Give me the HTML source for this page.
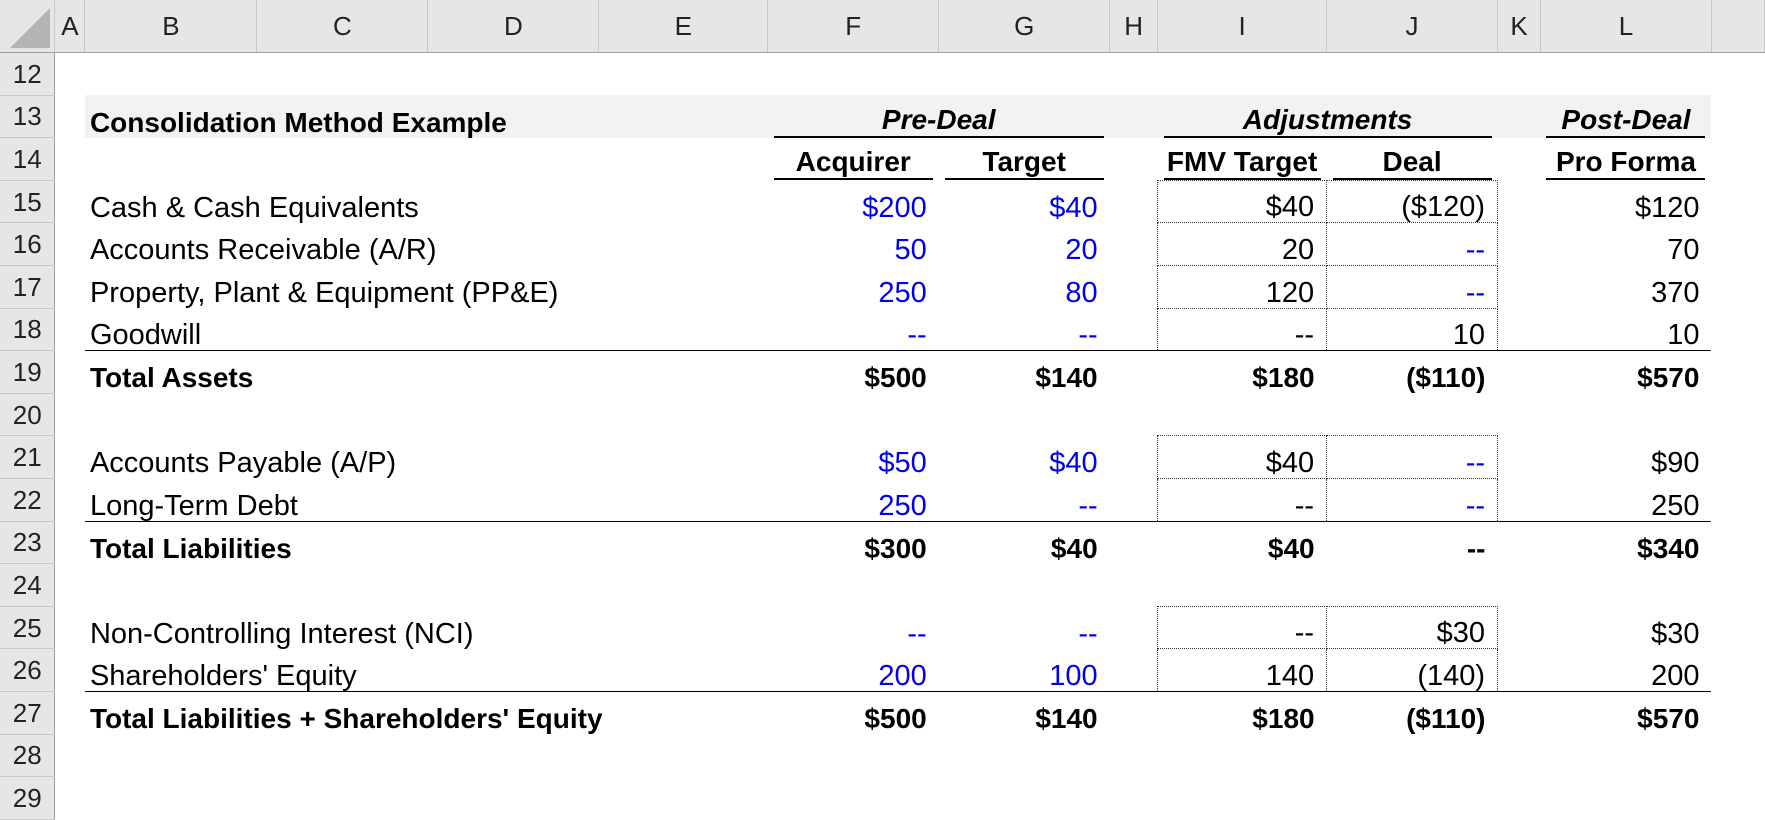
<!DOCTYPE html>
<html><head><meta charset="utf-8"><style>
body{margin:0;width:1765px;height:781px;overflow:hidden;background:#fff;font-family:"Liberation Sans",Arial,sans-serif;}
table{border-collapse:collapse;table-layout:fixed;position:absolute;left:0;top:0;}
td{padding:0;height:41.6px;font-size:29px;white-space:nowrap;overflow:visible;vertical-align:bottom;line-height:30px;}
tr.hdr td{height:52px;background:#e6e6e6;text-align:center;vertical-align:middle;font-size:26px;color:#222;border-right:1px solid #c8c8c8;border-bottom:1px solid #9e9e9e;line-height:30px;}
td.rn{background:#e6e6e6;text-align:center;font-size:26px;color:#222;border-right:1px solid #9e9e9e;border-bottom:1px solid #c8c8c8;vertical-align:middle;}
.r{text-align:right;padding-right:12px;}
.l{padding-left:5px;}
.b{font-weight:bold;font-size:28px;}
.bl{color:#0000ee;}
.g{background:#f2f2f2;}
.d{border:1px dotted #333;}
.t td.x{border-top:1.5px solid #000;}
.u{border-bottom:2px solid #000;margin:0 6px;text-align:center;line-height:32px;}
.it{font-style:italic;font-weight:bold;font-size:28px;}
</style></head><body>
<table>
<colgroup>
<col style="width:55px"><col style="width:30px"><col style="width:172px"><col style="width:171px"><col style="width:171px"><col style="width:169px"><col style="width:171px"><col style="width:171px"><col style="width:48px"><col style="width:169px"><col style="width:171px"><col style="width:43px"><col style="width:171px"><col style="width:53px">
</colgroup>
<tr class="hdr"><td style="position:relative"><svg width="40" height="40" style="position:absolute;right:4px;bottom:4px"><polygon points="40,0 40,40 0,40" fill="#b4b4b4"/></svg></td><td>A</td><td>B</td><td>C</td><td>D</td><td>E</td><td>F</td><td>G</td><td>H</td><td>I</td><td>J</td><td>K</td><td>L</td><td></td></tr>
<tr><td class="rn">12</td><td></td><td></td><td></td><td></td><td></td><td></td><td></td><td></td><td></td><td></td><td></td><td></td><td></td></tr>
<tr><td class="rn">13</td><td></td><td class="g l b" colspan="4">Consolidation Method Example</td><td class="g" colspan="2"><div class="u it">Pre-Deal</div></td><td class="g"></td><td class="g" colspan="2"><div class="u it">Adjustments</div></td><td class="g"></td><td class="g"><div class="u it">Post-Deal</div></td><td></td></tr>
<tr><td class="rn">14</td><td></td><td></td><td></td><td></td><td></td><td><div class="u b">Acquirer</div></td><td><div class="u b">Target</div></td><td></td><td><div class="u b">FMV Target</div></td><td><div class="u b">Deal</div></td><td></td><td><div class="u b">Pro Forma</div></td><td></td></tr>
<tr><td class="rn">15</td><td></td><td class="l" colspan="4">Cash &amp; Cash Equivalents</td><td class="r bl">$200</td><td class="r bl">$40</td><td></td><td class="r d">$40</td><td class="r d">($120)</td><td></td><td class="r">$120</td><td></td></tr>
<tr><td class="rn">16</td><td></td><td class="l" colspan="4">Accounts Receivable (A/R)</td><td class="r bl">50</td><td class="r bl">20</td><td></td><td class="r d">20</td><td class="r d bl">--</td><td></td><td class="r">70</td><td></td></tr>
<tr><td class="rn">17</td><td></td><td class="l" colspan="4">Property, Plant &amp; Equipment (PP&amp;E)</td><td class="r bl">250</td><td class="r bl">80</td><td></td><td class="r d">120</td><td class="r d bl">--</td><td></td><td class="r">370</td><td></td></tr>
<tr><td class="rn">18</td><td></td><td class="l" colspan="4">Goodwill</td><td class="r bl">--</td><td class="r bl">--</td><td></td><td class="r d">--</td><td class="r d">10</td><td></td><td class="r">10</td><td></td></tr>
<tr class="t"><td class="rn">19</td><td></td><td class="x l b" colspan="4">Total Assets</td><td class="x r b">$500</td><td class="x r b">$140</td><td class="x"></td><td class="x r b">$180</td><td class="x r b">($110)</td><td class="x"></td><td class="x r b">$570</td><td></td></tr>
<tr><td class="rn">20</td><td></td><td></td><td></td><td></td><td></td><td></td><td></td><td></td><td></td><td></td><td></td><td></td><td></td></tr>
<tr><td class="rn">21</td><td></td><td class="l" colspan="4">Accounts Payable (A/P)</td><td class="r bl">$50</td><td class="r bl">$40</td><td></td><td class="r d">$40</td><td class="r d bl">--</td><td></td><td class="r">$90</td><td></td></tr>
<tr><td class="rn">22</td><td></td><td class="l" colspan="4">Long-Term Debt</td><td class="r bl">250</td><td class="r bl">--</td><td></td><td class="r d">--</td><td class="r d bl">--</td><td></td><td class="r">250</td><td></td></tr>
<tr class="t"><td class="rn">23</td><td></td><td class="x l b" colspan="4">Total Liabilities</td><td class="x r b">$300</td><td class="x r b">$40</td><td class="x"></td><td class="x r b">$40</td><td class="x r b">--</td><td class="x"></td><td class="x r b">$340</td><td></td></tr>
<tr><td class="rn">24</td><td></td><td></td><td></td><td></td><td></td><td></td><td></td><td></td><td></td><td></td><td></td><td></td><td></td></tr>
<tr><td class="rn">25</td><td></td><td class="l" colspan="4">Non-Controlling Interest (NCI)</td><td class="r bl">--</td><td class="r bl">--</td><td></td><td class="r d">--</td><td class="r d">$30</td><td></td><td class="r">$30</td><td></td></tr>
<tr><td class="rn">26</td><td></td><td class="l" colspan="4">Shareholders' Equity</td><td class="r bl">200</td><td class="r bl">100</td><td></td><td class="r d">140</td><td class="r d">(140)</td><td></td><td class="r">200</td><td></td></tr>
<tr class="t"><td class="rn">27</td><td></td><td class="x l b" colspan="4">Total Liabilities + Shareholders' Equity</td><td class="x r b">$500</td><td class="x r b">$140</td><td class="x"></td><td class="x r b">$180</td><td class="x r b">($110)</td><td class="x"></td><td class="x r b">$570</td><td></td></tr>
<tr><td class="rn">28</td><td></td><td></td><td></td><td></td><td></td><td></td><td></td><td></td><td></td><td></td><td></td><td></td><td></td></tr>
<tr><td class="rn">29</td><td></td><td></td><td></td><td></td><td></td><td></td><td></td><td></td><td></td><td></td><td></td><td></td><td></td></tr>
</table>
</body></html>
